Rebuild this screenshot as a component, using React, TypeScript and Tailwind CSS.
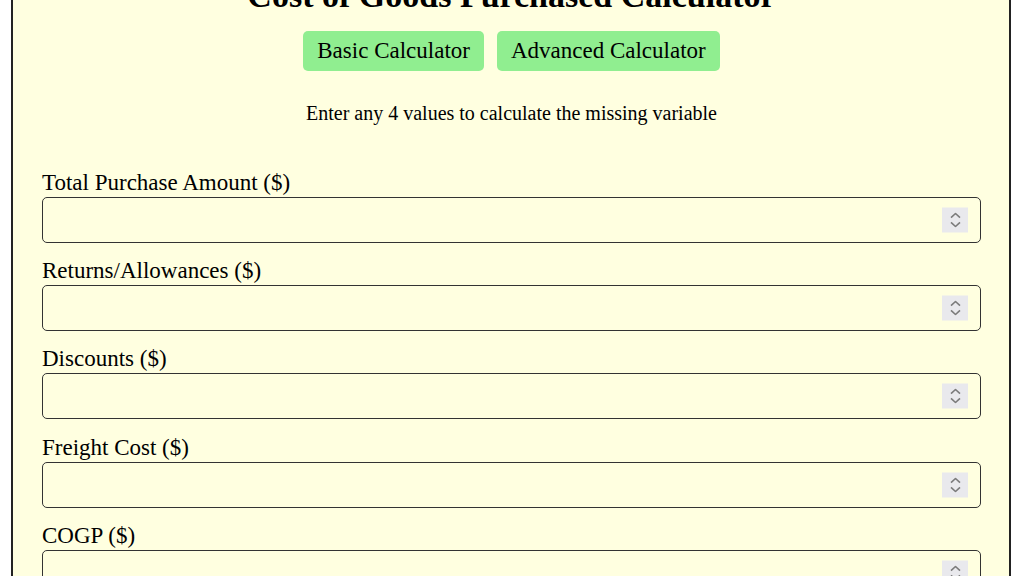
import React from "react";

const fields = [
    "Total Purchase Amount ($)",
    "Returns/Allowances ($)",
    "Discounts ($)",
    "Freight Cost ($)",
    "COGP ($)",
];

function Spinner() {
    return (
        <div className="pointer-events-none absolute right-[13px] top-1/2 -translate-y-1/2 w-[26px] h-[25px] bg-[#e9e9ed] flex flex-col items-center justify-center gap-[3px]">
            <svg width="11" height="6" viewBox="0 0 11 6" fill="none">
                <path d="M1 5.2 L5.5 1 L10 5.2" stroke="#7b7b7b" strokeWidth="1.6" />
            </svg>
            <svg width="11" height="6" viewBox="0 0 11 6" fill="none">
                <path d="M1 0.8 L5.5 5 L10 0.8" stroke="#7b7b7b" strokeWidth="1.6" />
            </svg>
        </div>
    );
}

export default function App() {
    return (
        <div className="h-screen w-full overflow-hidden bg-white font-['Liberation_Serif','Times_New_Roman',serif] text-black">
            <div className="ml-[11px] w-[1000px] -mt-[40px] border-2 border-[#222] bg-[#ffffe0] pt-[14px] pl-[29px] pr-[28px] pb-10">
                <h1 className="m-0 text-center text-[34px] leading-[39px] font-bold">
                    Cost of Goods Purchased Calculator
                </h1>
                <div className="mt-[16px] flex justify-center gap-[13px]">
                    <button className="h-[40px] px-[14px] rounded-[5px] bg-[#90ee90] text-[23px] leading-[26px]">
                        Basic Calculator
                    </button>
                    <button className="h-[40px] px-[14px] rounded-[5px] bg-[#90ee90] text-[23px] leading-[26px]">
                        Advanced Calculator
                    </button>
                </div>
                <p className="mt-[31px] text-center text-[20px] leading-[23px]">
                    Enter any 4 values to calculate the missing variable
                </p>
                <div className="mt-[43.6px]">
                    {fields.map((f) => (
                        <div key={f} className="mb-[14.45px]">
                            <label className="block text-[23px] leading-[26px] translate-y-[1px]">{f}</label>
                            <div className="relative mt-[2px]">
                                <input
                                    type="text"
                                    className="block w-full h-[46px] rounded-[5px] border border-[#333] bg-[#ffffe0] px-[10px] text-[20px] outline-none"
                                />
                                <Spinner />
                            </div>
                        </div>
                    ))}
                </div>
            </div>
        </div>
    );
}
